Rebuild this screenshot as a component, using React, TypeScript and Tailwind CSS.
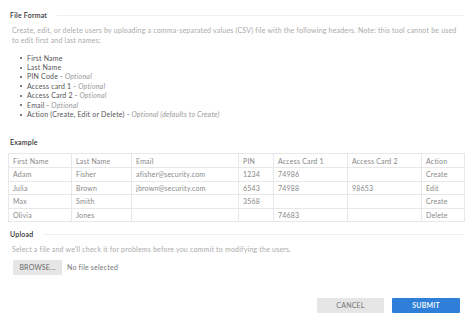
const rows = [
  ['Adam', 'Fisher', 'afisher@security.com', '1234', '74986', '', 'Create'],
  ['Julia', 'Brown', 'jbrown@security.com', '6543', '74988', '98653', 'Edit'],
  ['Max', 'Smith', '', '3568', '', '', 'Create'],
  ['Olivia', 'Jones', '', '', '74683', '', 'Delete'],
]

const headers = ['First Name', 'Last Name', 'Email', 'PIN', 'Access Card 1', 'Access Card 2', 'Action']
const widths = ['w-[63px]', 'w-[60px]', 'w-[107px]', 'w-[35px]', 'w-[74px]', 'w-[74px]', 'w-[43px]']

const fields: [string, string?][] = [
  ['First Name'],
  ['Last Name'],
  ['PIN Code - ', 'Optional'],
  ['Access card 1 - ', 'Optional'],
  ['Access Card 2 - ', 'Optional'],
  ['Email - ', 'Optional'],
  ['Action (Create, Edit or Delete) - ', 'Optional (defaults to Create)'],
]

function SectionTitle({ title }: { title: string }) {
  return (
    <div className="flex items-center gap-[10px] pr-[10px]">
      <span className="text-[7px] font-semibold text-[#333]">{title}</span>
      <div className="h-px flex-1 bg-[#f0f0f0]" />
    </div>
  )
}

export default function App() {
  return (
    <div
      className="h-[322px] w-[474px] overflow-hidden bg-white pl-[10px] pt-[10px] tracking-[0.2px] text-[#666]"
      style={{ fontFamily: 'Lato, "Noto Sans", sans-serif' }}
    >
      {/* File Format */}
      <SectionTitle title="File Format" />
      <p className="mt-[4px] pl-[2px] pr-[14px] text-[7px] leading-[10px] text-[#aaa]">
        Create, edit, or delete users by uploading a comma-separated values (CSV) file with the following headers. Note: this tool cannot be used to edit first and last names:
      </p>
      <ul className="mt-[9px] pl-[10px] text-[7px] leading-[9.4px] text-[#555]">
        {fields.map(([label, opt]) => (
          <li key={label} className="flex items-center">
            <span className="mr-[5px] h-[2px] w-[2px] rounded-full bg-[#555]" />
            <span>
              {label}
              {opt && <em className="text-[#999]">{opt}</em>}
            </span>
          </li>
        ))}
      </ul>

      {/* Example */}
      <div className="mt-[18px] text-[7px] font-semibold leading-[10px] text-[#333]">Example</div>
      <table className="ml-[-2px] mt-[6px] w-[456px] table-fixed border-collapse text-[7px] text-[#888]">
        <thead>
          <tr className="h-[14px]">
            {headers.map((h, i) => (
              <th key={h} className={`${widths[i]} border border-[#e8e8e8] px-[4px] text-left font-normal`}>
                {h}
              </th>
            ))}
          </tr>
        </thead>
        <tbody>
          {rows.map((r) => (
            <tr key={r[0]} className="h-[13.5px]">
              {r.map((c, i) => (
                <td key={i} className="border border-[#e8e8e8] px-[4px]">
                  {c}
                </td>
              ))}
            </tr>
          ))}
        </tbody>
      </table>

      {/* Upload */}
      <div className="mt-[7px]">
        <SectionTitle title="Upload" />
      </div>
      <p className="mt-[4px] pl-[2px] text-[7px] leading-[10px] text-[#aaa]">
        Select a file and we'll check it for problems before you commit to modifying the users.
      </p>
      <div className="mt-[6px] flex items-center gap-[5px] pl-[3px]">
        <button className="h-[15px] w-[49px] rounded-[1px] bg-[#e6e6e6] text-[7px] tracking-[0.2px] text-[#666]">BROWSE...</button>
        <span className="text-[7px] text-[#777]">No file selected</span>
      </div>

      {/* Actions */}
      <div className="mt-[23px] flex justify-end gap-[8px] pr-[14px]">
        <button className="h-[15px] w-[67px] rounded-[1px] bg-[#e6e6e6] text-[7px] tracking-[0.2px] text-[#777]">CANCEL</button>
        <button className="h-[15px] w-[68px] rounded-[1px] bg-[#2f7fd8] text-[7px] font-semibold tracking-[0.2px] text-white">SUBMIT</button>
      </div>
    </div>
  )
}
